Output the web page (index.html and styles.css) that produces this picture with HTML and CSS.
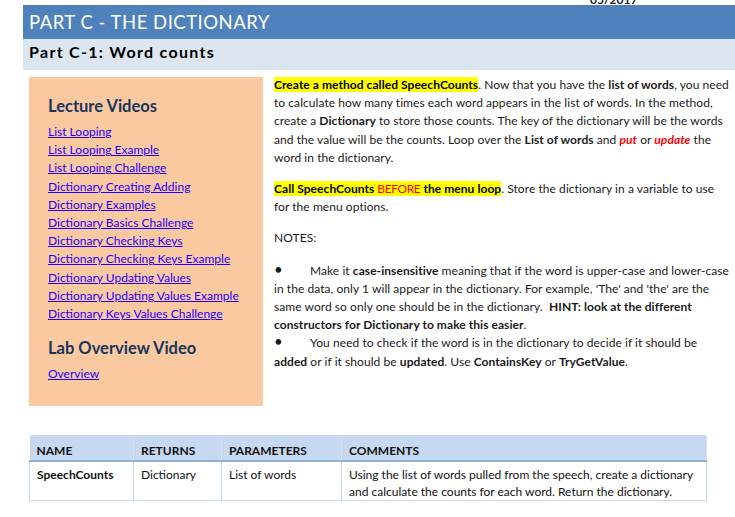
FILE: index.html
```html
<!DOCTYPE html>
<html lang="en">
<head>
  <meta charset="UTF-8">
  <meta name="viewport" content="width=device-width, initial-scale=1.0">
  <title>Part C - The Dictionary</title>
  <link rel="stylesheet" href="styles.css">
</head>
<body>
  <div class="top-strip"><span class="page-date">05/2017</span></div>

  <header class="part-header">
    <h1 class="part-title">PART C - THE DICTIONARY</h1>
    <h2 class="part-sub">Part C-1: Word counts</h2>
  </header>

  <main class="content">
    <aside class="sidebar">
      <h3 class="side-heading">Lecture Videos</h3>
      <ul class="link-list">
        <li><a href="#">List Looping</a></li>
        <li><a href="#">List Looping Example</a></li>
        <li><a href="#">List Looping Challenge</a></li>
        <li><a href="#">Dictionary Creating Adding</a></li>
        <li><a href="#">Dictionary Examples</a></li>
        <li><a href="#">Dictionary Basics Challenge</a></li>
        <li><a href="#">Dictionary Checking Keys</a></li>
        <li><a href="#">Dictionary Checking Keys Example</a></li>
        <li><a href="#">Dictionary Updating Values</a></li>
        <li><a href="#">Dictionary Updating Values Example</a></li>
        <li><a href="#">Dictionary Keys Values Challenge</a></li>
      </ul>
      <h3 class="side-heading lab">Lab Overview Video</h3>
      <ul class="link-list">
        <li><a href="#">Overview</a></li>
      </ul>
    </aside>

    <section class="notes">
      <p><mark><b>Create a method called SpeechCounts</b></mark>. Now that you have the <b>list of words</b>, you need to calculate how many times each word appears in the list of words. In the method, create a <b>Dictionary</b> to store those counts. The key of the dictionary will be the words and the value will be the counts. Loop over the <b>List of words</b> and <b class="put">put</b> or <b class="put">update</b> the word in the dictionary.</p>
      <p><mark><b>Call SpeechCounts <span class="before">BEFORE</span> the menu loop</b></mark>. Store the dictionary in a variable to use for the menu options.</p>
      <p>NOTES:</p>
      <div class="bullets">
        <p><span class="bullet">•</span>Make it <b>case-insensitive</b> meaning that if the word is upper-case and lower-case in the data, only 1 will appear in the dictionary. For example, 'The' and 'the' are the same word so only one should be in the dictionary.&nbsp; <b>HINT: look at the different constructors for Dictionary to make this easier</b>.</p>
        <p><span class="bullet">•</span>You need to check if the word is in the dictionary to decide if it should be <b>added</b> or if it should be <b>updated</b>. Use <b>ContainsKey</b> or <b>TryGetValue</b>.</p>
      </div>
    </section>
  </main>

  <table class="method-table">
    <thead>
      <tr>
        <th class="col-name">NAME</th>
        <th class="col-returns">RETURNS</th>
        <th class="col-params">PARAMETERS</th>
        <th>COMMENTS</th>
      </tr>
    </thead>
    <tbody>
      <tr>
        <td><b>SpeechCounts</b></td>
        <td>Dictionary</td>
        <td>List of words</td>
        <td>Using the list of words pulled from the speech, create a dictionary and calculate the counts for each word. Return the dictionary.</td>
      </tr>
    </tbody>
  </table>
</body>
</html>
```

FILE: styles.css
```css
/* Basic reset */
body {
  margin: 0;
  background-color: #fff;
  color: #1a1a1a;
  font-family: Lato, "Open Sans", sans-serif;
  font-size: 12px;
  line-height: 18.2px;
  overflow: hidden;
}

/* Date cut off by the top of the page */
.top-strip {
  height: 5px;
  overflow: hidden;
  padding-left: 590px;
  font-size: 12px;
  font-weight: bold;
  line-height: 0;
}

.page-date {
  color: #222;
}

/* Header bars */
.part-header {
  margin-left: 23px;
}

.part-title {
  margin: 0;
  height: 34px;
  padding-left: 6px;
  background-color: #4f81bd;
  color: #fff;
  font-size: 18.5px;
  font-weight: 400;
  line-height: 34px;
  letter-spacing: 0.5px;
}

.part-sub {
  margin: 0;
  height: 31px;
  padding-left: 6px;
  background-color: #dce6f1;
  color: #000;
  font-size: 16px;
  font-weight: 700;
  line-height: 25px;
  letter-spacing: 1.3px;
}

/* Sidebar and text column */
.content {
  display: flex;
  gap: 11px;
  margin: 7px 6px 0 29px;
}

.sidebar {
  flex: none;
  box-sizing: border-box;
  width: 234px;
  height: 329px;
  padding: 19px 10px 0 19px;
  background-color: #fac9a0;
}

.side-heading {
  margin: 0 0 7px;
  color: #17365d;
  font-size: 16.5px;
  font-weight: 700;
  line-height: 20px;
}

.side-heading.lab {
  margin: 15px 0 7px;
}

.link-list {
  margin: 0;
  padding: 0;
  list-style: none;
}

.link-list a {
  color: #1f00ff;
}

/* Notes */
.notes {
  flex: 1;
  margin-top: -1px;
  letter-spacing: 0.06px;
}

.notes p {
  margin: 0 0 13px;
}

.notes mark {
  background-color: #ff0;
  color: #000;
}

.notes .put {
  color: #f00;
  font-style: italic;
}

.before {
  color: #f00;
  font-weight: 400;
  letter-spacing: -0.4px;
}

.bullets {
  margin-top: 14px;
}

.bullets p {
  margin: 0;
}

.bullet {
  display: inline-block;
  width: 36px;
  font-size: 15px;
  line-height: 1;
}

/* Method table */
.method-table {
  width: 678px;
  margin: 29px 0 0 29px;
  border-collapse: collapse;
  table-layout: fixed;
  color: #111;
  line-height: 17px;
}

.method-table th {
  box-sizing: border-box;
  height: 26px;
  padding: 6px 7px 0;
  background-color: #c6d9f1;
  border-bottom: 2px solid #8eb0d8;
  border-right: 1px solid #d5e2f3;
  text-align: left;
  font-weight: 700;
}

.method-table td {
  padding: 4px 7px 0;
  border: 1px solid #c6d9f1;
  vertical-align: top;
}

.col-name {
  width: 104px;
}

.col-returns {
  width: 88px;
}

.col-params {
  width: 120px;
}
```
